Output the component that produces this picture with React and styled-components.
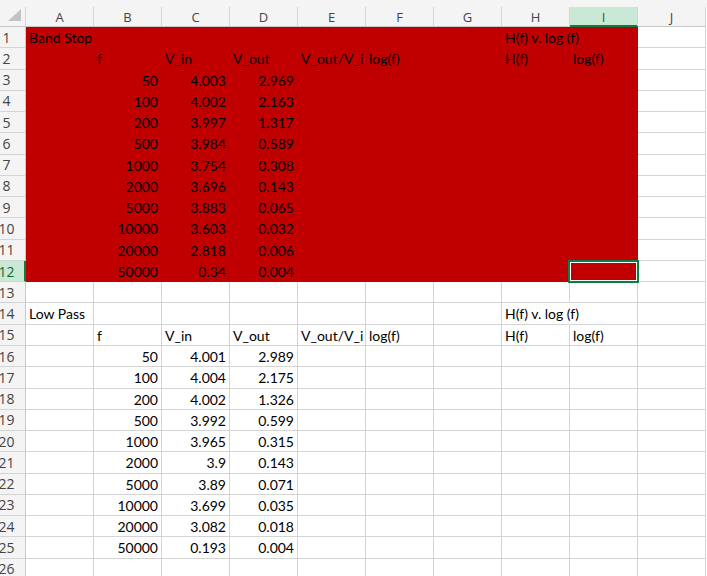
import React from "react";
import styled, { createGlobalStyle } from "styled-components";

const COLS = ["A", "B", "C", "D", "E", "F", "G", "H", "I", "J"];
const ROW_COUNT = 26;
const SELECTED = { col: "I", row: 12 };

const bandStop = [
  [50, "4.003", "2.969"],
  [100, "4.002", "2.163"],
  [200, "3.997", "1.317"],
  [500, "3.984", "0.589"],
  [1000, "3.754", "0.308"],
  [2000, "3.696", "0.143"],
  [5000, "3.883", "0.065"],
  [10000, "3.603", "0.032"],
  [20000, "2.818", "0.006"],
  [50000, "0.34", "0.004"],
];

const lowPass = [
  [50, "4.001", "2.989"],
  [100, "4.004", "2.175"],
  [200, "4.002", "1.326"],
  [500, "3.992", "0.599"],
  [1000, "3.965", "0.315"],
  [2000, "3.9", "0.143"],
  [5000, "3.89", "0.071"],
  [10000, "3.699", "0.035"],
  [20000, "3.082", "0.018"],
  [50000, "0.193", "0.004"],
];

// builds the cell map for one filter block
const addBlock = (cells, title, top, data) => {
  cells[`A${top}`] = { v: title };
  cells[`H${top}`] = { v: "H(f) v. log (f)", spill: true };
  const h = top + 1;
  cells[`B${h}`] = { v: "f" };
  cells[`C${h}`] = { v: "V_in" };
  cells[`D${h}`] = { v: "V_out" };
  cells[`E${h}`] = { v: "V_out/V_i" };
  cells[`F${h}`] = { v: "log(f)" };
  cells[`H${h}`] = { v: "H(f)" };
  cells[`I${h}`] = { v: "log(f)" };
  data.forEach((d, i) => {
    const r = h + 1 + i;
    cells[`B${r}`] = { v: d[0], num: true };
    cells[`C${r}`] = { v: d[1], num: true };
    cells[`D${r}`] = { v: d[2], num: true };
  });
};

const cells = {};
addBlock(cells, "Band Stop", 1, bandStop);
addBlock(cells, "Low Pass", 14, lowPass);

const isFilled = (col, row) => COLS.indexOf(col) <= 8 && row <= 12;

const GlobalStyle = createGlobalStyle`
  html, body {
    margin: 0;
    background: #ffffff;
    overflow: hidden;
  }
`;

const Page = styled.div`
  width: 707px;
  height: 576px;
  overflow: hidden;
  background: #ffffff;
`;

const TopStrip = styled.div`
  height: 7px;
  background: #f4f4f4;
`;

const Sheet = styled.div`
  display: grid;
  grid-template-columns: 26px repeat(10, 68px);
  grid-template-rows: 20px;
  grid-auto-rows: 21.27px;
`;

const Corner = styled.div`
  background: #f4f4f4;
  border-right: 1px solid #d4d4d4;
  border-bottom: 1px solid #c8c8c8;
  display: flex;
  align-items: flex-end;
  justify-content: flex-end;
  padding: 0 4px 5px 0;
  box-sizing: border-box;
`;

const ColHead = styled.div`
  box-sizing: border-box;
  background: ${(p) => (p.$active ? "#cae8d6" : "#f4f4f4")};
  color: ${(p) => (p.$active ? "#0f6b3a" : "#444444")};
  border-right: 1px solid #d4d4d4;
  border-bottom: ${(p) => (p.$active ? "2px solid #107c41" : "1px solid #c8c8c8")};
  font-family: "Open Sans", "Noto Sans", sans-serif;
  font-size: 13px;
  display: flex;
  align-items: center;
  justify-content: center;
  padding-top: ${(p) => (p.$active ? "1px" : "0")};
`;

const RowHead = styled.div`
  box-sizing: border-box;
  background: ${(p) => (p.$active ? "#cae8d6" : "#f4f4f4")};
  color: ${(p) => (p.$active ? "#0f6b3a" : "#444444")};
  border-bottom: 1px solid #d4d4d4;
  border-right: ${(p) => (p.$active ? "2px solid #107c41" : "1px solid #c8c8c8")};
  font-family: "Open Sans", "Noto Sans", sans-serif;
  font-size: 14px;
  display: flex;
  align-items: center;
  justify-content: center;
  padding-right: ${(p) => (p.$active ? "11px" : "12px")};
`;

const Cell = styled.div`
  position: relative;
  box-sizing: border-box;
  background: ${(p) => (p.$filled ? "#c00000" : "#ffffff")};
  border-right: 1px solid
    ${(p) => (p.$filled ? "#c00000" : p.$spill ? "transparent" : "#d4d4d4")};
  border-bottom: 1px solid ${(p) => (p.$filled ? "#c00000" : "#d4d4d4")};
  font-family: Lato, "Open Sans", sans-serif;
  font-size: 14px;
  line-height: 20px;
  padding: 1px 3px 0 3px;
  color: #000000;
  white-space: nowrap;
  text-align: ${(p) => (p.$num ? "right" : "left")};
  overflow: ${(p) => (p.$spill ? "visible" : "hidden")};
  z-index: ${(p) => (p.$spill || p.$selected ? 1 : "auto")};

  ${(p) =>
    p.$selected &&
    `
    overflow: visible;
    &::after {
      content: "";
      position: absolute;
      top: -1px;
      left: -2px;
      right: -2px;
      bottom: -2px;
      border: 2px solid #107c41;
      box-shadow: inset 0 0 0 1px #ffffff;
    }
  `}
`;

const CornerMark = () => (
  <svg width="13" height="12" viewBox="0 0 13 12">
    <polygon points="13,0 13,12 0,12" fill="#c2c2c2" />
  </svg>
);

const App = () => {
  const rows = Array.from({ length: ROW_COUNT }, (_, i) => i + 1);

  return (
    <Page>
      <GlobalStyle />
      <TopStrip />
      <Sheet>
        <Corner>
          <CornerMark />
        </Corner>
        {COLS.map((c) => (
          <ColHead key={c} $active={c === SELECTED.col}>
            {c}
          </ColHead>
        ))}

        {rows.map((r) => (
          <React.Fragment key={r}>
            <RowHead $active={r === SELECTED.row}>{r}</RowHead>
            {COLS.map((c) => {
              const cell = cells[`${c}${r}`];
              return (
                <Cell
                  key={c}
                  $filled={isFilled(c, r)}
                  $num={cell && cell.num}
                  $spill={cell && cell.spill}
                  $selected={c === SELECTED.col && r === SELECTED.row}
                >
                  {cell ? cell.v : ""}
                </Cell>
              );
            })}
          </React.Fragment>
        ))}
      </Sheet>
    </Page>
  );
};

export default App;
